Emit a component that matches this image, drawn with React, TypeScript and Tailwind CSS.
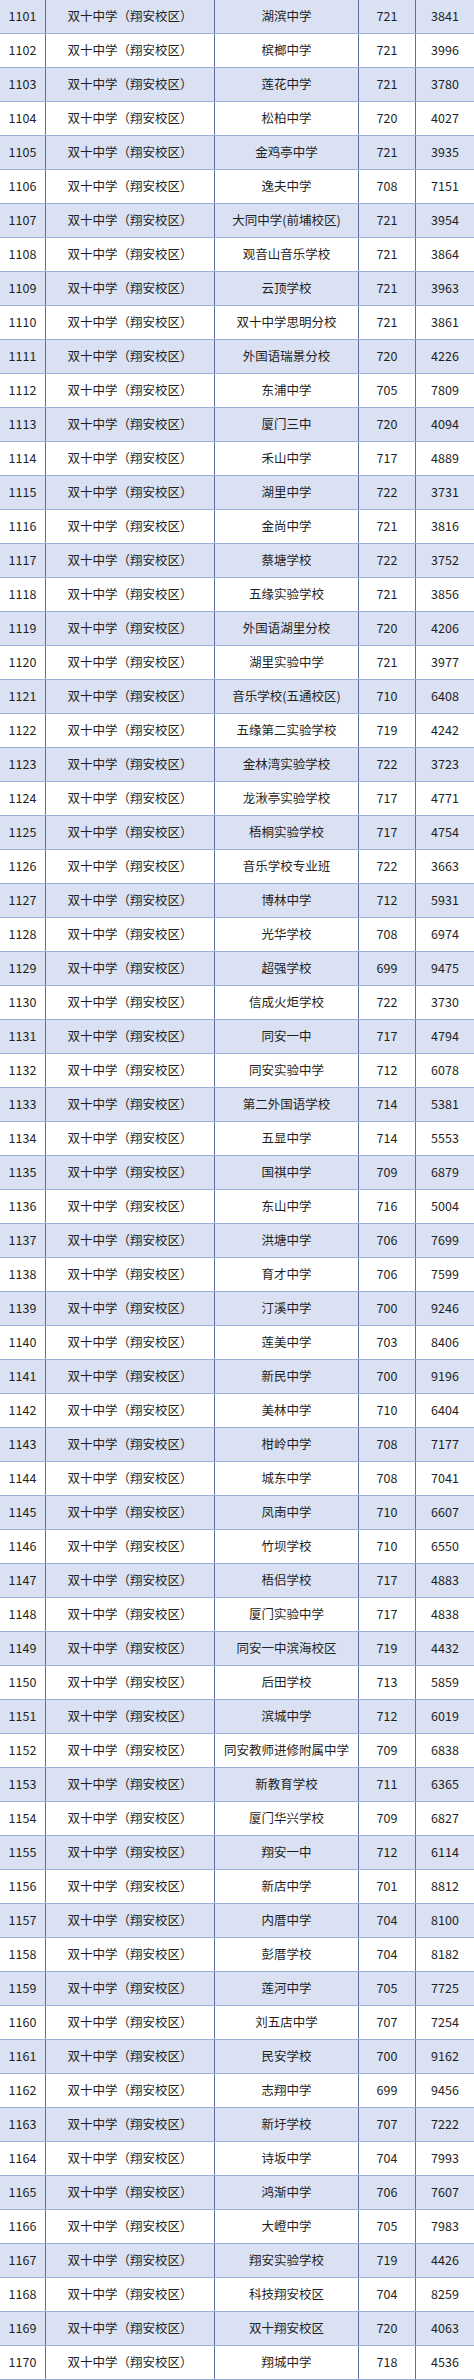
const schools: [string, number, number][] = [
  ["湖滨中学", 721, 3841],
  ["槟榔中学", 721, 3996],
  ["莲花中学", 721, 3780],
  ["松柏中学", 720, 4027],
  ["金鸡亭中学", 721, 3935],
  ["逸夫中学", 708, 7151],
  ["大同中学(前埔校区)", 721, 3954],
  ["观音山音乐学校", 721, 3864],
  ["云顶学校", 721, 3963],
  ["双十中学思明分校", 721, 3861],
  ["外国语瑞景分校", 720, 4226],
  ["东浦中学", 705, 7809],
  ["厦门三中", 720, 4094],
  ["禾山中学", 717, 4889],
  ["湖里中学", 722, 3731],
  ["金尚中学", 721, 3816],
  ["蔡塘学校", 722, 3752],
  ["五缘实验学校", 721, 3856],
  ["外国语湖里分校", 720, 4206],
  ["湖里实验中学", 721, 3977],
  ["音乐学校(五通校区)", 710, 6408],
  ["五缘第二实验学校", 719, 4242],
  ["金林湾实验学校", 722, 3723],
  ["龙湫亭实验学校", 717, 4771],
  ["梧桐实验学校", 717, 4754],
  ["音乐学校专业班", 722, 3663],
  ["博林中学", 712, 5931],
  ["光华学校", 708, 6974],
  ["超强学校", 699, 9475],
  ["信成火炬学校", 722, 3730],
  ["同安一中", 717, 4794],
  ["同安实验中学", 712, 6078],
  ["第二外国语学校", 714, 5381],
  ["五显中学", 714, 5553],
  ["国祺中学", 709, 6879],
  ["东山中学", 716, 5004],
  ["洪塘中学", 706, 7699],
  ["育才中学", 706, 7599],
  ["汀溪中学", 700, 9246],
  ["莲美中学", 703, 8406],
  ["新民中学", 700, 9196],
  ["美林中学", 710, 6404],
  ["柑岭中学", 708, 7177],
  ["城东中学", 708, 7041],
  ["凤南中学", 710, 6607],
  ["竹坝学校", 710, 6550],
  ["梧侣学校", 717, 4883],
  ["厦门实验中学", 717, 4838],
  ["同安一中滨海校区", 719, 4432],
  ["后田学校", 713, 5859],
  ["滨城中学", 712, 6019],
  ["同安教师进修附属中学", 709, 6838],
  ["新教育学校", 711, 6365],
  ["厦门华兴学校", 709, 6827],
  ["翔安一中", 712, 6114],
  ["新店中学", 701, 8812],
  ["内厝中学", 704, 8100],
  ["彭厝学校", 704, 8182],
  ["莲河中学", 705, 7725],
  ["刘五店中学", 707, 7254],
  ["民安学校", 700, 9162],
  ["志翔中学", 699, 9456],
  ["新圩学校", 707, 7222],
  ["诗坂中学", 704, 7993],
  ["鸿渐中学", 706, 7607],
  ["大嶝中学", 705, 7983],
  ["翔安实验学校", 719, 4426],
  ["科技翔安校区", 704, 8259],
  ["双十翔安校区", 720, 4063],
  ["翔城中学", 718, 4536],
];

const cell = "flex items-center justify-center border-r border-[#5d6fa5] h-full";

export default function App() {
  return (
    <div className="w-[474px] bg-white text-[12.5px] text-[#1f1f1f] font-['Noto_Sans_CJK_SC',sans-serif] leading-none">
      {schools.map(([name, score, rank], i) => (
        <div
          key={i}
          className={`flex h-[34px] border-b border-[#9eaed8] ${
            i % 2 === 0 ? "bg-[#d9e1f3]" : "bg-white"
          }`}
        >
          <div className={`${cell} w-[46px]`}>{1101 + i}</div>
          <div className={`${cell} w-[169px]`}>双十中学（翔安校区）</div>
          <div className={`${cell} w-[144px]`}>{name}</div>
          <div className={`${cell} w-[57px]`}>{score}</div>
          <div className="flex items-center justify-center h-full flex-1">{rank}</div>
        </div>
      ))}
    </div>
  );
}
